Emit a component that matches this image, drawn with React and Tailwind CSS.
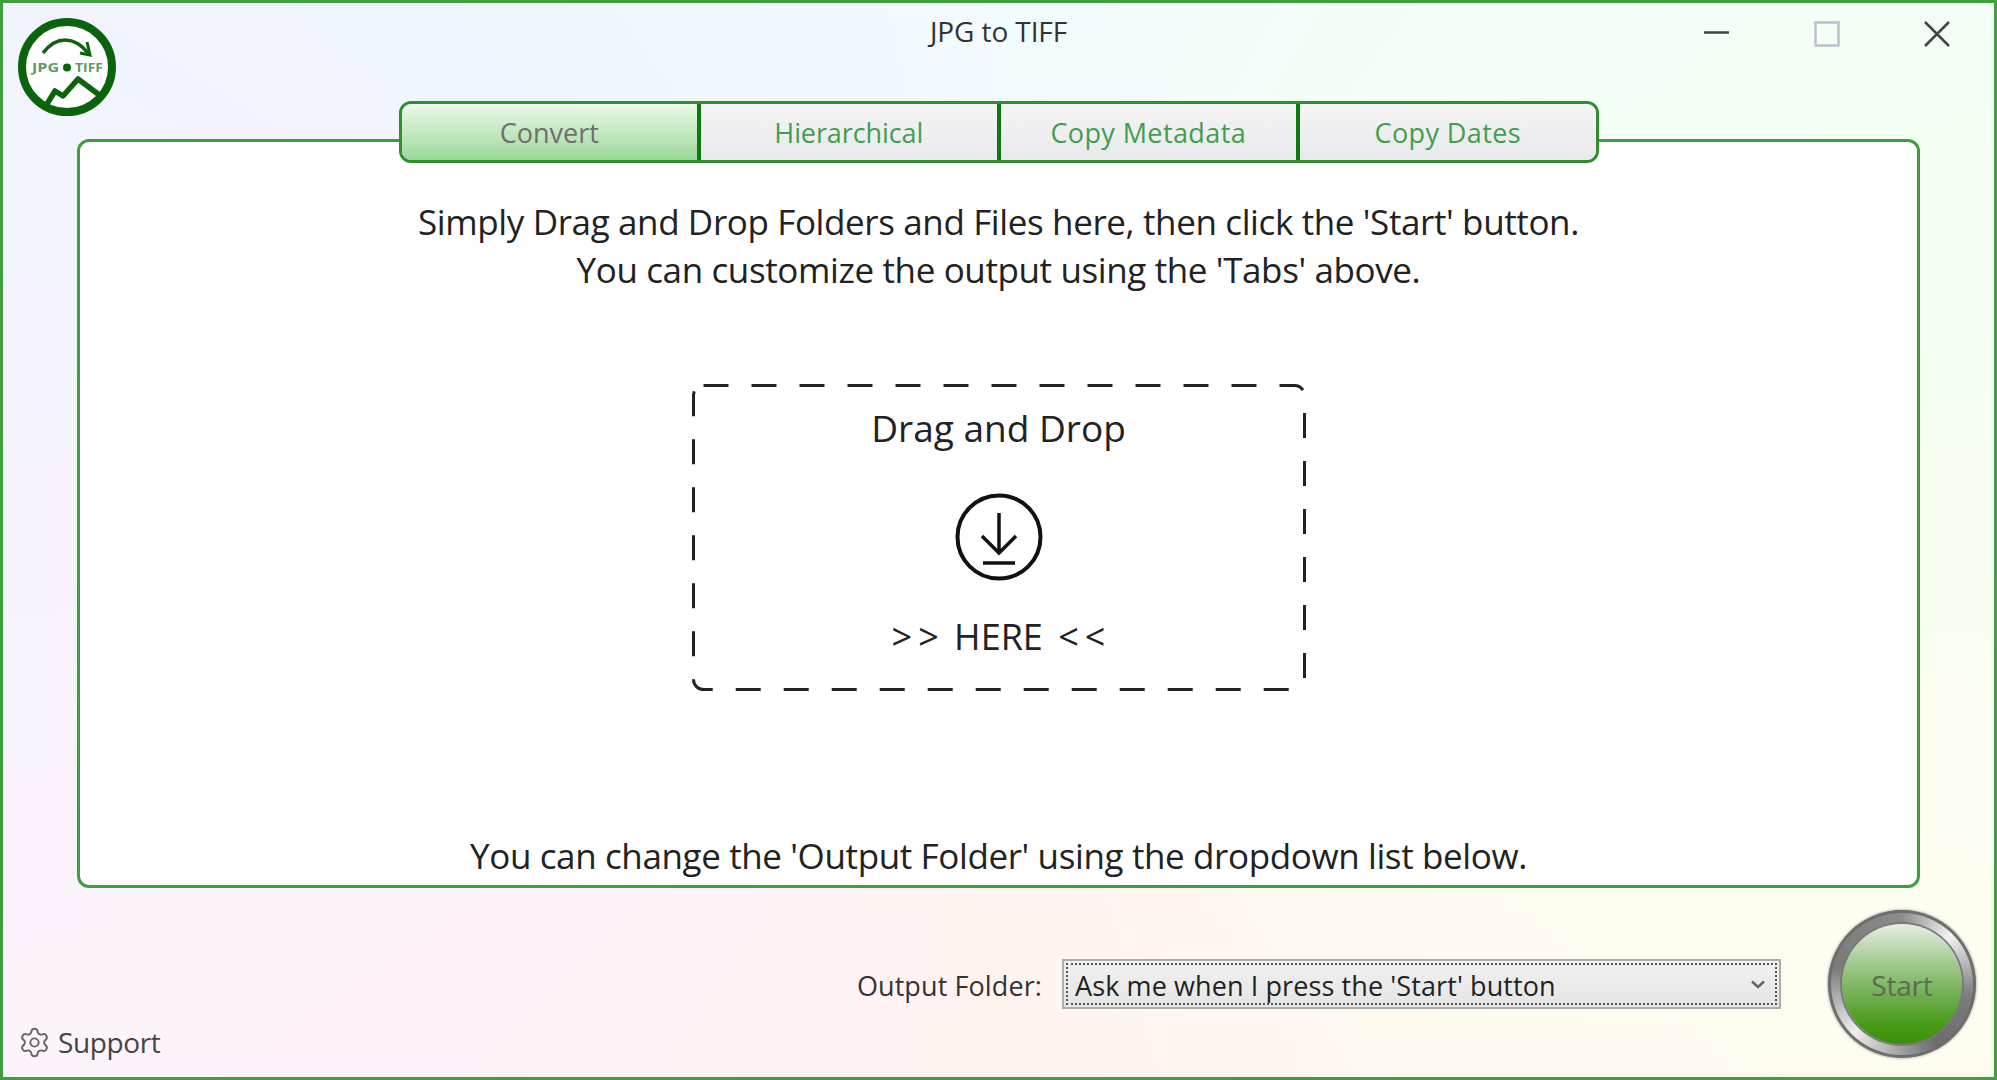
import { Settings } from 'lucide-react';

const font = { fontFamily: '"Open Sans", sans-serif' };
const tabs = [
  { label: 'Convert', cls: 'tracking-[0px] text-[#6f6f6f] bg-gradient-to-b from-[#ecf8ea] to-[#9cd898] border-r-[4px] border-[#0d7a0d]' },
  { label: 'Hierarchical', cls: 'tracking-[-0.1px] text-[#3f9f4f] bg-gradient-to-b from-[#f5f5f5] to-[#e9e8ec] border-r-[4px] border-[#0d7a0d]' },
  { label: 'Copy Metadata', cls: 'tracking-[0.4px] text-[#3f9f4f] bg-gradient-to-b from-[#f5f5f5] to-[#e9e8ec] border-r-[4px] border-[#0d7a0d]' },
  { label: 'Copy Dates', cls: 'tracking-[0.4px] text-[#3f9f4f] bg-gradient-to-b from-[#f5f5f5] to-[#e9e8ec]' },
];

function Logo() {
  return (
    <svg width="98" height="98" viewBox="0 0 98 98" fill="none">
      <circle cx="49" cy="49" r="45" fill="#fff" stroke="#0b640b" strokeWidth="8" />
      <path d="M25 35 C38 18 56 17 71 36" stroke="#0b640b" strokeWidth="3.500" />
      <path d="M69 24 L72 37 L62 35" stroke="#0b640b" strokeWidth="3" />
      <text x="14" y="53.500" fontSize="12" fontWeight="700" fill="#5f9a5f" fontFamily="Open Sans, sans-serif" textLength="27" lengthAdjust="spacingAndGlyphs">JPG</text>
      <circle cx="49" cy="49.500" r="4" fill="#0b640b" />
      <text x="57" y="53.500" fontSize="12" fontWeight="700" fill="#5f9a5f" fontFamily="Open Sans, sans-serif" textLength="28" lengthAdjust="spacingAndGlyphs">TIFF</text>
      <path d="M29 86 L37 73 L45 78 L60 61 L84 79" stroke="#0b640b" strokeWidth="5.500" strokeLinejoin="round" />
    </svg>
  );
}

function WindowControls() {
  return (
    <svg width="260" height="50" viewBox="0 0 260 50" fill="none">
      <path d="M3 29.500 H28" stroke="#444" strokeWidth="2.500" />
      <rect x="114.500" y="19.500" width="23" height="23" stroke="#bcc0cc" strokeWidth="2.500" />
      <path d="M224 19 L248 43 M248 19 L224 43" stroke="#444" strokeWidth="2.500" />
    </svg>
  );
}

function DownloadIcon() {
  return (
    <svg width="88" height="88" viewBox="0 0 88 88" fill="none" stroke="#111">
      <circle cx="44" cy="44" r="41.500" strokeWidth="4" />
      <path d="M44 20 V60 M27 43 L44 60 L61 43" strokeWidth="3.500" />
      <path d="M28 70 H60" strokeWidth="3.500" />
    </svg>
  );
}

export default function App() {
  return (
    <div
      className="w-[1997px] h-[1080px] border-[3px] border-[#3f9f3f] flex flex-col overflow-hidden bg-[conic-gradient(at_50%_50%,#f2fbfd_0deg,#f3fff4_62deg,#fffdf0_118deg,#fff3f0_180deg,#fdf3fb_242deg,#f1f4fe_298deg,#f2fbfd_360deg)]"
      style={font}
    >
      {/* title bar */}
      <div className="h-[98px] shrink-0 grid grid-cols-[1fr_auto_1fr]">
        <div className="pl-[15px] pt-[15px]">
          <Logo />
        </div>
        <div className="pt-[10px] text-[28px] leading-[36px] tracking-[-0.1px] text-[#333]">JPG to TIFF</div>
        <div className="flex justify-end pr-[33px]">
          <WindowControls />
        </div>
      </div>

      {/* tabs, they overlap the top edge of the panel */}
      <div className="relative z-10 -mb-[24px] h-[62px] shrink-0 flex justify-center">
        <div className="flex w-[1200px] rounded-[12px] border-[3px] border-[#2f8f2f] overflow-hidden">
          {tabs.map(t => (
            <div key={t.label} className={`flex-1 flex items-center justify-center pt-[3px] text-[27px] ${t.cls}`}>
              {t.label}
            </div>
          ))}
        </div>
      </div>

      {/* main panel */}
      <div className="mx-[74px] h-[749px] shrink-0 rounded-[12px] border-[3px] border-[#3f9f3f] bg-white flex flex-col items-center text-[#222] text-[35px] tracking-[-0.38px]">
        <div className="mt-[56px] text-center leading-[48px]">
          <div>Simply Drag and Drop Folders and Files here, then click the 'Start' button.</div>
          <div>You can customize the output using the 'Tabs' above.</div>
        </div>

        <div className="relative mt-[90px] w-[614px] h-[307px] flex flex-col items-center">
          <svg className="absolute inset-0" width="614" height="307" viewBox="0 0 614 307" fill="none">
            <rect x="1.500" y="1.500" width="611" height="304" rx="10" stroke="#222" strokeWidth="3" strokeDasharray="25 23" />
          </svg>
          <div className="mt-[20px] leading-[48px] text-[37px] tracking-normal">Drag and Drop</div>
          <div className="mt-[41px]">
            <DownloadIcon />
          </div>
          <div className="mt-[32px] leading-[48px] text-[36px] tracking-normal [word-spacing:6px]">
            <span className="tracking-[6px]">&gt;</span>&gt; HERE <span className="tracking-[6px]">&lt;</span>&lt;
          </div>
        </div>

        <div className="mt-auto mb-[5px] leading-[48px]">You can change the 'Output Folder' using the dropdown list below.</div>
      </div>

      {/* footer */}
      <div className="flex-1 flex items-end pl-[15px] pr-[18px] pb-[19px]">
        <div className="flex items-center gap-[7px] text-[28px] leading-[36px] tracking-[-0.4px] text-[#444] -mb-[2px]">
          <Settings size={33} strokeWidth={1.4} className="text-[#666]" />
          <span>Support</span>
        </div>
        <div className="ml-auto mb-[49px] flex items-center">
          <span className="pt-[4px] text-[27px] tracking-[0.1px] text-[#333] mr-[20px]">Output Folder:</span>
          <div className="w-[719px] h-[50px] border-[2px] border-[#adadad] p-[2px] bg-gradient-to-b from-[#f1f1f1] to-[#e5e5e5]">
            <div className="h-full border-[2px] border-dotted border-[#555] flex items-center justify-between pl-[7px] pr-[10px]">
              <span className="pt-[4px] text-[27px] tracking-[0.1px] text-[#222]">Ask me when I press the 'Start' button</span>
              <svg width="14" height="9" viewBox="0 0 14 9" fill="none" stroke="#666" strokeWidth="2.500">
                <path d="M1 1.500 L7 7 L13 1.500" />
              </svg>
            </div>
          </div>
        </div>
        <div className="ml-[47px] w-[148px] h-[148px] rounded-full p-[14px] bg-[conic-gradient(#8c8c8c,#f2f2f2_45deg,#7c7c7c_100deg,#6c6c6c_150deg,#eeeeee_225deg,#7a7a7a_285deg,#8c8c8c)] shadow-[inset_0_0_0_3px_#6e6e6e,0_0_3px_#888]">
          <button className="w-full h-full rounded-full flex items-center justify-center pt-[2px] text-[28px] tracking-[-0.2px] text-[#5d6b55] bg-[linear-gradient(#e6efe2_0%,#a8cd97_30%,#6fae50_60%,#469a16_85%,#3b8f08_100%)] shadow-[0_0_0_2px_#7a7a7a]">
            Start
          </button>
        </div>
      </div>
    </div>
  );
}
